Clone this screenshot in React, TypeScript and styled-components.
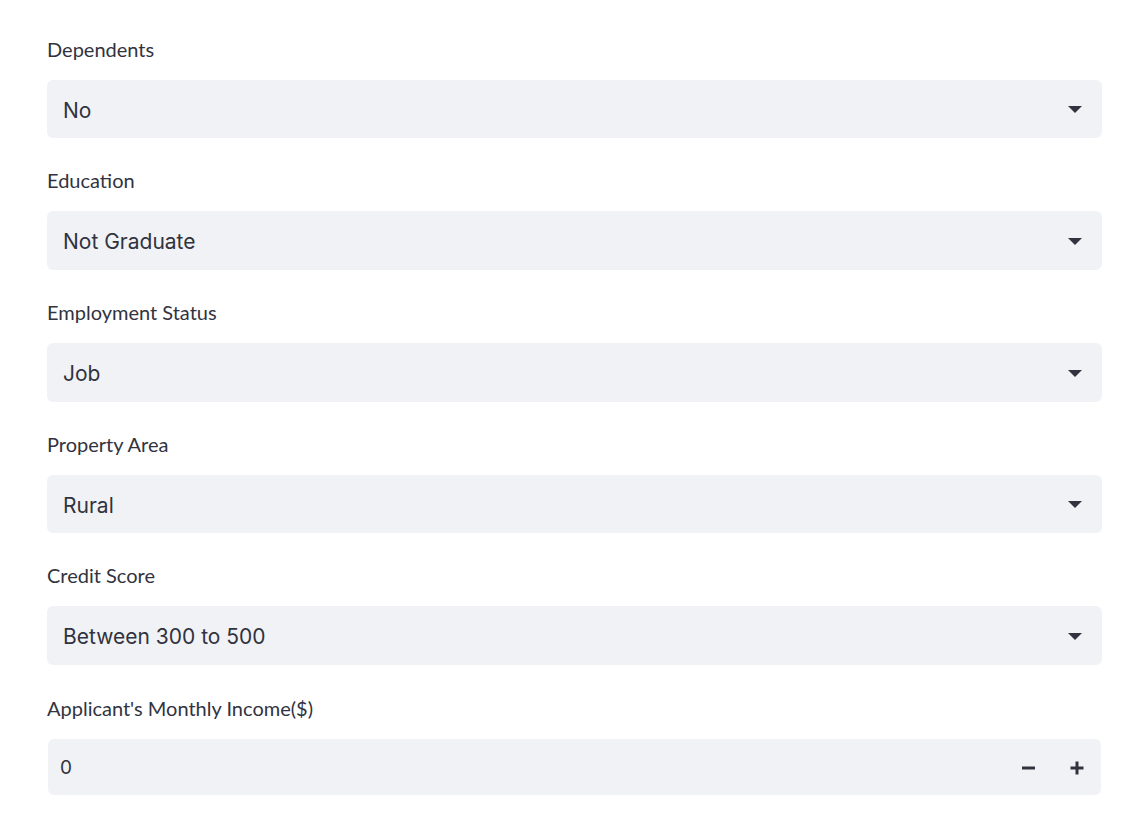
import React from 'react';
import styled, { createGlobalStyle } from 'styled-components';

const GlobalStyle = createGlobalStyle`
  body {
    margin: 0;
    background: #ffffff;
    font-family: 'Lato', 'Noto Sans', sans-serif;
    color: #31333f;
  }
`;

const Page = styled.div`
  padding: 37px 42px 0 47px;
  display: flex;
  flex-direction: column;
  gap: 30px;
`;

const Field = styled.div<{ $extra?: number }>`
  display: flex;
  flex-direction: column;
  margin-top: ${(p) => p.$extra ?? 0}px;
`;

const Label = styled.label`
  font-family: 'Lato', sans-serif;
  font-size: 20px;
  line-height: 24px;
  color: #31333f;
  margin-bottom: 19px;
`;

const SelectBox = styled.div<{ $h?: number }>`
  height: ${(p) => p.$h ?? 58}px;
  background: #f0f2f6;
  border-radius: 6px;
  display: flex;
  align-items: center;
  justify-content: space-between;
  padding: 2px 20px 0 16px;
  box-sizing: border-box;
`;

const Value = styled.span`
  font-family: 'Inter', 'Noto Sans', sans-serif;
  font-size: 21px;
  color: #31333f;
`;

const NumberBox = styled.div`
  height: 56px;
  margin: 0 1px;
  background: #f0f2f6;
  border-radius: 6px;
  display: flex;
  align-items: center;
  padding: 1px 0 0 12px;
  box-sizing: border-box;
`;

const NumberValue = styled.span`
  flex: 1;
  font-family: 'Inter', 'Noto Sans', sans-serif;
  font-size: 19px;
`;

const StepButton = styled.button`
  width: 48px;
  height: 54px;
  border: none;
  background: transparent;
  display: flex;
  align-items: center;
  justify-content: center;
  padding: 0;
  cursor: pointer;
`;

const Caret = () => (
  <svg width="14" height="8" viewBox="0 0 14 8">
    <path d="M0 0 H14 L7 7 Z" fill="#31333f" />
  </svg>
);

const Minus = () => (
  <svg width="14" height="14" viewBox="0 0 14 14">
    <rect x="0" y="5.5" width="13" height="3" fill="#31333f" />
  </svg>
);

const Plus = () => (
  <svg width="14" height="14" viewBox="0 0 14 14">
    <rect x="0.5" y="5.5" width="13" height="3" fill="#31333f" />
    <rect x="5.5" y="0.5" width="3" height="13" fill="#31333f" />
  </svg>
);

const selects = [
  { label: 'Dependents', value: 'No', h: 58 },
  { label: 'Education', value: 'Not Graduate', h: 59 },
  { label: 'Employment Status', value: 'Job', h: 59 },
  { label: 'Property Area', value: 'Rural', h: 58 },
  { label: 'Credit Score', value: 'Between 300 to 500', h: 59 },
];

const App: React.FC = () => {
  return (
    <>
      <GlobalStyle />
      <Page>
        {selects.map((s) => (
          <Field key={s.label}>
            <Label>{s.label}</Label>
            <SelectBox $h={s.h}>
              <Value>{s.value}</Value>
              <Caret />
            </SelectBox>
          </Field>
        ))}
        <Field $extra={1}>
          <Label>Applicant's Monthly Income($)</Label>
          <NumberBox>
            <NumberValue>0</NumberValue>
            <StepButton><Minus /></StepButton>
            <StepButton><Plus /></StepButton>
          </NumberBox>
        </Field>
      </Page>
    </>
  );
};

export default App;
